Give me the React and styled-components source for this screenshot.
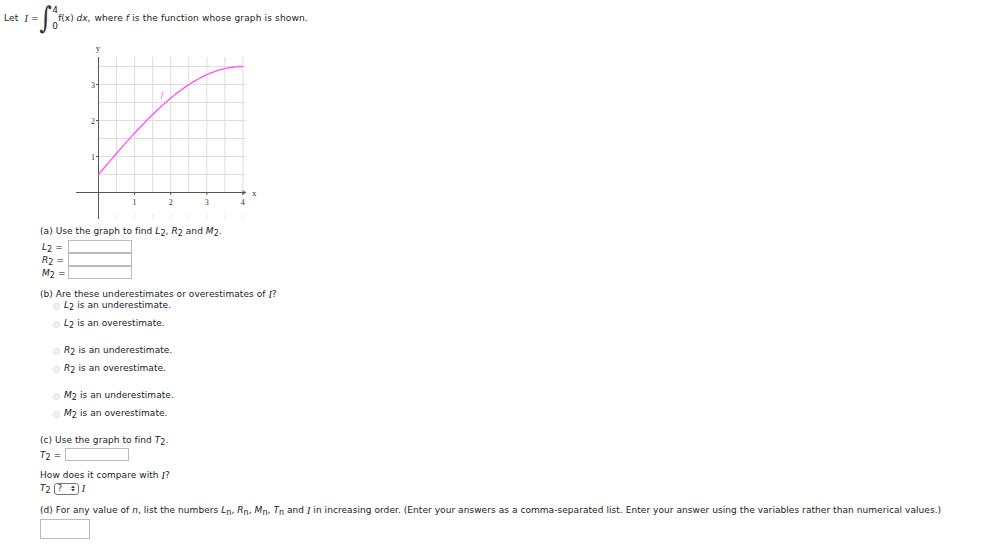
import React from "react";
import styled, { createGlobalStyle } from "styled-components";

const Global = createGlobalStyle`
  html, body { margin: 0; padding: 0; background: #fff; }
  body { font-family: "DejaVu Sans", Verdana, sans-serif; font-size: 9px; letter-spacing: 0.06px; color: #222; }
`;

const Page = styled.div`
  width: 998px;
  height: 557px;
  position: relative;
`;

const Header = styled.div`
  display: flex;
  align-items: center;
  height: 36px;
  padding-left: 4px;
  white-space: nowrap;
  font-size: 9px;
  letter-spacing: 0.15px;
`;

const MathI = styled.span`
  font-family: "Liberation Serif", "Times New Roman", serif;
  font-style: italic;
  font-size: ${(p) => p.$s || 10}px;
`;

const Var = styled.span`
  font-style: italic;
`;

const Expr = styled.span`
  font-size: 9px;
  letter-spacing: 0;
  margin-right: 4px;
`;

const Sub = styled.span`
  font-size: 8px;
  position: relative;
  top: 2px;
  font-style: normal;
`;

const Integral = styled.span`
  display: inline-flex;
  align-items: center;
  margin: 0 0 0 1px;
`;

const IntSign = styled.span`
  font-family: "DejaVu Serif", serif;
  font-size: 24px;
  display: inline-block;
  transform: scaleY(1.25);
  line-height: 1;
  color: #333;
`;

const Limits = styled.span`
  display: inline-flex;
  flex-direction: column;
  justify-content: space-between;
  height: 26px;
  font-size: 9px;
  line-height: 10px;
`;

const Graph = styled.svg`
  display: block;
  margin: 4px 0 0 70px;
`;

const Section = styled.div`
  margin-left: 40px;
`;

const Line = styled.div`
  height: 13px;
  line-height: 13px;
  white-space: nowrap;
  margin-top: ${(p) => p.$mt || 0}px;
  display: flex;
  align-items: center;
`;

const AnsRow = styled.div`
  display: flex;
  align-items: center;
  height: 13px;
  padding-left: ${(p) => p.$pl ?? 2}px;
  margin-top: ${(p) => p.$mt || 0}px;
`;

const Label = styled.span`
  display: inline-block;
  width: ${(p) => p.$w || 26}px;
  white-space: nowrap;
`;

const Box = styled.div`
  width: ${(p) => p.$w || 62}px;
  height: ${(p) => p.$h || 11}px;
  border: 1px solid #bbb;
  background: #fff;
`;

const RadioRow = styled.div`
  display: flex;
  align-items: center;
  height: 18px;
  padding-left: 13px;
  margin-top: ${(p) => p.$mt || 0}px;
  white-space: nowrap;
`;

const Radio = styled.span`
  width: 5px;
  height: 5px;
  border-radius: 50%;
  border: 1px solid #ddd;
  background: #f2f2f2;
  margin-right: 4px;
  margin-top: 2px;
`;

const Select = styled.span`
  display: inline-flex;
  align-items: center;
  justify-content: space-between;
  width: 17px;
  height: 10px;
  border: 1px solid #777;
  border-radius: 3px;
  padding: 0 3px;
  margin: 0 3px 0 3px;
  font-size: 8px;
`;

const xs = (v) => 28.5 + v * 36.1;
const ys = (v) => 152.5 - v * 36;

function Chart() {
  const pts = [];
  for (let i = 0; i <= 80; i++) {
    const x = (i / 80) * 4;
    const y = 0.5 + 3 * Math.sin((Math.PI * x) / 8);
    pts.push(`${xs(x).toFixed(2)},${ys(y).toFixed(2)}`);
  }
  const vert = [1, 2, 3, 4, 5, 6, 7, 8].map((i) => xs(i * 0.5));
  const hor = [1, 2, 3, 4, 5, 6, 7].map((j) => ys(j * 0.5));
  return (
    <Graph width="200" height="181" viewBox="0 0 200 181">
      {vert.map((x, i) => (
        <line key={"v" + i} x1={x} y1="17" x2={x} y2="152.5" stroke="#ddd" strokeWidth="1" />
      ))}
      {vert.map((x, i) => (
        <line key={"b" + i} x1={x} y1="174" x2={x} y2="179" stroke="#ececec" strokeWidth="1" />
      ))}
      {hor.map((y, i) => (
        <line key={"h" + i} x1="28.5" y1={y} x2="176" y2={y} stroke="#ddd" strokeWidth="1" />
      ))}
      <line x1="6" y1="152.5" x2="175" y2="152.5" stroke="#555" strokeWidth="1" />
      <path d="M172,150.5 L176,152.5 L172,154.5" fill="none" stroke="#555" strokeWidth="0.8" />
      <line x1="28.5" y1="17" x2="28.5" y2="179" stroke="#555" strokeWidth="1" />
      {[1, 2, 3].map((v) => (
        <line key={"t" + v} x1="26" y1={ys(v)} x2="28.5" y2={ys(v)} stroke="#555" strokeWidth="1" />
      ))}
      {[1, 2, 3, 4].map((v) => (
        <line key={"xt" + v} x1={xs(v)} y1="152.5" x2={xs(v)} y2="155" stroke="#555" strokeWidth="1" />
      ))}
      <g fontFamily="'Liberation Serif', serif" fontSize="8" fill="#333">
        {[1, 2, 3].map((v) => (
          <text key={"yl" + v} x="25" y={ys(v) + 3} textAnchor="end">{v}</text>
        ))}
        {[1, 2, 3, 4].map((v) => (
          <text key={"xl" + v} x={xs(v)} y="165" textAnchor="middle">{v}</text>
        ))}
        <text x="28" y="11" textAnchor="middle" fontSize="9">y</text>
        <text x="182" y="155.5" fontSize="9">x</text>
      </g>
      <polyline points={pts.join(" ")} fill="none" stroke="#ff4dff" strokeWidth="1.3" />
      <text x="91" y="57" fontFamily="'Liberation Serif', serif" fontStyle="italic" fontSize="9" fill="#ff4dff">f</text>
    </Graph>
  );
}

const V = ({ l }) => (
  <>
    <Var>{l}</Var>
    <Sub>2</Sub>
  </>
);

const Vn = ({ l }) => (
  <>
    <Var>{l}</Var>
    <Sub>n</Sub>
  </>
);

export default function App() {
  return (
    <Page>
      <Global />
      <Header>
        Let&nbsp;&nbsp;<MathI>I</MathI>&nbsp;=
        <Integral>
          <IntSign>∫</IntSign>
          <Limits>
            <span>4</span>
            <span>0</span>
          </Limits>
        </Integral>
        <Expr>f(x) <Var>dx</Var>,</Expr>
        where&nbsp;<Var>f</Var>&nbsp;is the function whose graph is shown.
      </Header>
      <Chart />
      <Section>
        <Line $mt={4}>
          (a) Use the graph to find&nbsp;<V l="L" />,&nbsp;<V l="R" />&nbsp;and&nbsp;<V l="M" />.
        </Line>
        <AnsRow $mt={2}>
          <Label $w={26}><V l="L" />&nbsp;=</Label>
          <Box />
        </AnsRow>
        <AnsRow>
          <Label $w={26}><V l="R" />&nbsp;=</Label>
          <Box />
        </AnsRow>
        <AnsRow>
          <Label $w={26}><V l="M" />&nbsp;=</Label>
          <Box />
        </AnsRow>
        <Line $mt={9}>
          (b) Are these underestimates or overestimates of&nbsp;<MathI>I</MathI>?
        </Line>
        <RadioRow $mt={-5}><Radio /><V l="L" />&nbsp;is an underestimate.</RadioRow>
        <RadioRow><Radio /><V l="L" />&nbsp;is an overestimate.</RadioRow>
        <RadioRow $mt={9}><Radio /><V l="R" />&nbsp;is an underestimate.</RadioRow>
        <RadioRow><Radio /><V l="R" />&nbsp;is an overestimate.</RadioRow>
        <RadioRow $mt={9}><Radio /><V l="M" />&nbsp;is an underestimate.</RadioRow>
        <RadioRow><Radio /><V l="M" />&nbsp;is an overestimate.</RadioRow>
        <Line $mt={12}>(c) Use the graph to find&nbsp;<V l="T" />.</Line>
        <AnsRow $pl={0} $mt={1}>
          <Label $w={25}><V l="T" />&nbsp;=</Label>
          <Box />
        </AnsRow>
        <Line $mt={8}>How does it compare with&nbsp;<MathI>I</MathI>?</Line>
        <Line>
          <V l="T" />
          <Select>
            <span>?</span>
            <svg width="4" height="7" viewBox="0 0 4 7">
              <path d="M0,3 L2,0.5 L4,3 Z M0,4 L2,6.5 L4,4 Z" fill="#444" />
            </svg>
          </Select>
          <MathI>I</MathI>
        </Line>
        <Line $mt={9}>
          (d) For any value of&nbsp;<Var>n</Var>, list the numbers&nbsp;<Vn l="L" />,&nbsp;<Vn l="R" />,&nbsp;<Vn l="M" />,&nbsp;<Vn l="T" />&nbsp;and&nbsp;<MathI>I</MathI>&nbsp;in increasing order. (Enter your answers as a comma-separated list. Enter your answer using the variables rather than numerical values.)
        </Line>
        <AnsRow $pl={0} $mt={2} style={{ height: 20 }}>
          <Box $w={48} $h={18} />
        </AnsRow>
      </Section>
    </Page>
  );
}
